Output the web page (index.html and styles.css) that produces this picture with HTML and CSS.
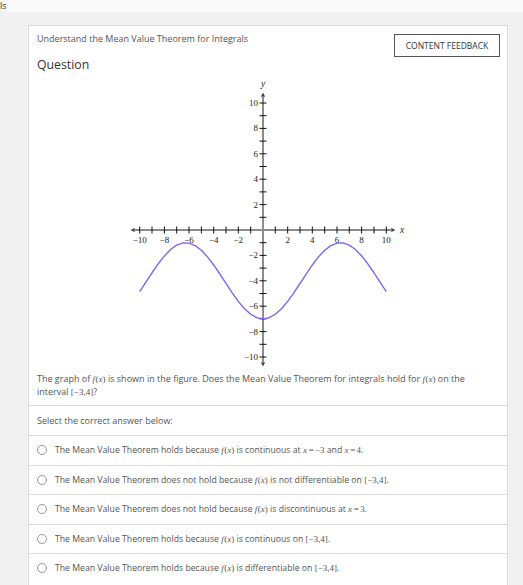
FILE: index.html
```html
<!DOCTYPE html>
<html>
<head>
<meta charset="utf-8">
<link rel="stylesheet" href="styles.css">
</head>
<body>
<div class="topbar">ls</div>
<main class="main">
  <section class="card">
    <header class="card-head">
      <div class="head-left">
        <div class="topic">Understand the Mean Value Theorem for Integrals</div>
        <h1 class="q-title">Question</h1>
      </div>
      <button class="feedback">CONTENT FEEDBACK</button>
    </header>
    <svg class="graph" width="478" height="298" viewBox="0 0 478 298">
      <g class="axes">
        <line x1="104" y1="155" x2="364" y2="155"/>
        <line x1="234" y1="20" x2="234" y2="289"/>
      </g>
      <g class="arrows">
        <path d="M101.5 155 L106 152.7 L105 155 L106 157.3 Z"/>
        <path d="M366.5 155 L362 152.7 L363 155 L362 157.3 Z"/>
        <path d="M234 17.5 L231.7 22 L234 21 L236.3 22 Z"/>
        <path d="M234 291.5 L231.7 287 L234 288 L236.3 287 Z"/>
      </g>
      <path class="ticks" d="M110.7 151.5v7M123 151.5v7M135.4 151.5v7M147.7 151.5v7M160 151.5v7M172.4 151.5v7M184.7 151.5v7M197 151.5v7M209.3 151.5v7M221.7 151.5v7M246.3 151.5v7M258.7 151.5v7M271 151.5v7M283.3 151.5v7M295.7 151.5v7M308 151.5v7M320.3 151.5v7M332.6 151.5v7M345 151.5v7M357.3 151.5v7
      M230.5 28h7M230.5 40.7h7M230.5 53.4h7M230.5 66.1h7M230.5 78.8h7M230.5 91.5h7M230.5 104.2h7M230.5 116.9h7M230.5 129.6h7M230.5 142.3h7M230.5 167.7h7M230.5 180.4h7M230.5 193.1h7M230.5 205.8h7M230.5 218.5h7M230.5 231.2h7M230.5 243.9h7M230.5 256.6h7M230.5 269.3h7M230.5 282h7"/>
      <g class="xl">
        <text x="110.7" y="167.5">−10</text>
        <text x="135.4" y="167.5">−8</text>
        <text x="160" y="167.5">−6</text>
        <text x="184.7" y="167.5">−4</text>
        <text x="209.3" y="167.5">−2</text>
        <text x="258.7" y="167.5">2</text>
        <text x="283.3" y="167.5">4</text>
        <text x="308" y="167.5">6</text>
        <text x="332.6" y="167.5">8</text>
        <text x="357.3" y="167.5">10</text>
      </g>
      <g class="yl">
        <text x="229" y="31">10</text>
        <text x="229" y="56.4">8</text>
        <text x="229" y="81.8">6</text>
        <text x="229" y="107.2">4</text>
        <text x="229" y="132.6">2</text>
        <text x="229" y="183.4">−2</text>
        <text x="229" y="208.8">−4</text>
        <text x="229" y="234.2">−6</text>
        <text x="229" y="259.6">−8</text>
        <text x="229" y="285">−10</text>
      </g>
      <text class="al" x="371" y="158">x</text>
      <text class="al" x="232" y="12">y</text>
      <polyline class="curve" points="110.7,216.61 116.9,207.23 123.0,197.77 129.2,188.80 135.4,180.90 141.5,174.54 147.7,170.12 153.9,167.92 160.0,168.08 166.2,170.58 172.4,175.28 178.5,181.87 184.7,189.95 190.8,199.01 197.0,208.49 203.2,217.81 209.3,226.39 215.5,233.68 221.7,239.24 227.8,242.72 234,243.9 240.2,242.72 246.3,239.24 252.5,233.68 258.7,226.39 264.8,217.81 271.0,208.49 277.2,199.01 283.3,189.95 289.5,181.87 295.7,175.28 301.8,170.58 308.0,168.08 314.1,167.92 320.3,170.12 326.5,174.54 332.6,180.90 338.8,188.80 345.0,197.77 351.1,207.23 357.3,216.61"/>
    </svg>
    <p class="prompt"><span>The graph of </span><span class="m"><i>f</i>(<i>x</i>)</span><span> is shown in the figure. Does the Mean Value Theorem for integrals hold for </span><span class="m"><i>f</i>(<i>x</i>)</span><span> on the</span> <span>interval </span><span class="m">[−3,4]</span><span>?</span></p>
    <div class="row select">Select the correct answer below:</div>
    <ul class="options">
      <li class="row"><span class="radio"></span><span>The Mean Value Theorem holds because <span class="m"><i>f</i>(<i>x</i>)</span> is continuous at <span class="m"><i>x</i> = −3</span> and <span class="m"><i>x</i> = 4</span>.</span></li>
      <li class="row"><span class="radio"></span><span>The Mean Value Theorem does not hold because <span class="m"><i>f</i>(<i>x</i>)</span> is not differentiable on <span class="m">[−3,4]</span>.</span></li>
      <li class="row"><span class="radio"></span><span>The Mean Value Theorem does not hold because <span class="m"><i>f</i>(<i>x</i>)</span> is discontinuous at <span class="m"><i>x</i> = 3</span>.</span></li>
      <li class="row"><span class="radio"></span><span>The Mean Value Theorem holds because <span class="m"><i>f</i>(<i>x</i>)</span> is continuous on <span class="m">[−3,4]</span>.</span></li>
      <li class="row"><span class="radio"></span><span>The Mean Value Theorem holds because <span class="m"><i>f</i>(<i>x</i>)</span> is differentiable on <span class="m">[−3,4]</span>.</span></li>
    </ul>
  </section>
</main>
</body>
</html>
```

FILE: styles.css
```css
* { box-sizing: border-box; }
html, body { margin: 0; padding: 0; }
body {
  background: #f1f1f1;
  font-family: "Open Sans", "Liberation Sans", sans-serif;
  color: #555;
}
.topbar {
  height: 12px;
  background: #fafafa;
  font-size: 9px;
  line-height: 12px;
  color: #333;
  padding-left: 0;
}
.main {
  padding: 13px 15px 0 28px;
}
.card {
  background: #fff;
  border: 1px solid #dcdcdc;
  border-bottom: none;
  height: 560px;
}
.card-head {
  display: flex;
  justify-content: space-between;
  align-items: flex-start;
  padding: 7px 7px 0 8px;
}
.topic {
  font-size: 9px;
  line-height: 12px;
  color: #555;
}
.q-title {
  margin: 12px 0 0;
  font-size: 12.3px;
  line-height: 16px;
  font-weight: 400;
  color: #333;
}
.feedback {
  margin-top: 1px;
  height: 23px;
  width: 106px;
  padding: 0;
  background: #fff;
  border: 1px solid #555;
  border-radius: 0;
  font-family: "Open Sans", "Liberation Sans", sans-serif;
  font-size: 8.5px;
  color: #333;
}
.graph {
  display: block;
  margin-top: 2px;
}
.axes line { stroke: #8c8c8c; stroke-width: 2; }
.arrows path { fill: #444; }
.ticks { stroke: #111; stroke-width: 1; fill: none; }
.xl text, .yl text {
  font-family: "Liberation Serif", "DejaVu Serif", serif;
  font-size: 9px;
  fill: #222;
}
.xl text { text-anchor: middle; }
.yl text { text-anchor: end; }
.al {
  font-family: "Liberation Serif", serif;
  font-style: italic;
  font-size: 9.5px;
  fill: #222;
}
.curve {
  fill: none;
  stroke: #7f66f2;
  stroke-width: 1.4;
  stroke-linejoin: round;
}
.prompt {
  margin: 0;
  padding: 0 22px 7px 8px;
  font-size: 9px;
  line-height: 12.5px;
  color: #555;
}
.m {
  font-family: "Liberation Serif", serif;
  font-size: 9px;
  line-height: 1;
  word-spacing: -1px;
}
.m i { font-style: italic; }
.m i:first-child { margin-right: 0.5px; }
.options {
  list-style: none;
  margin: 0;
  padding: 0;
}
.row {
  display: flex;
  align-items: center;
  height: 29.5px;
  padding: 0 8px;
  border-top: 1px solid #dcdcdc;
  font-size: 8.7px;
  color: #555;
}
.select { height: 30px; font-size: 9px; }
.radio {
  width: 10px;
  height: 10px;
  border: 1px solid #999;
  border-radius: 50%;
  margin-right: 8px;
  flex: none;
}
```
